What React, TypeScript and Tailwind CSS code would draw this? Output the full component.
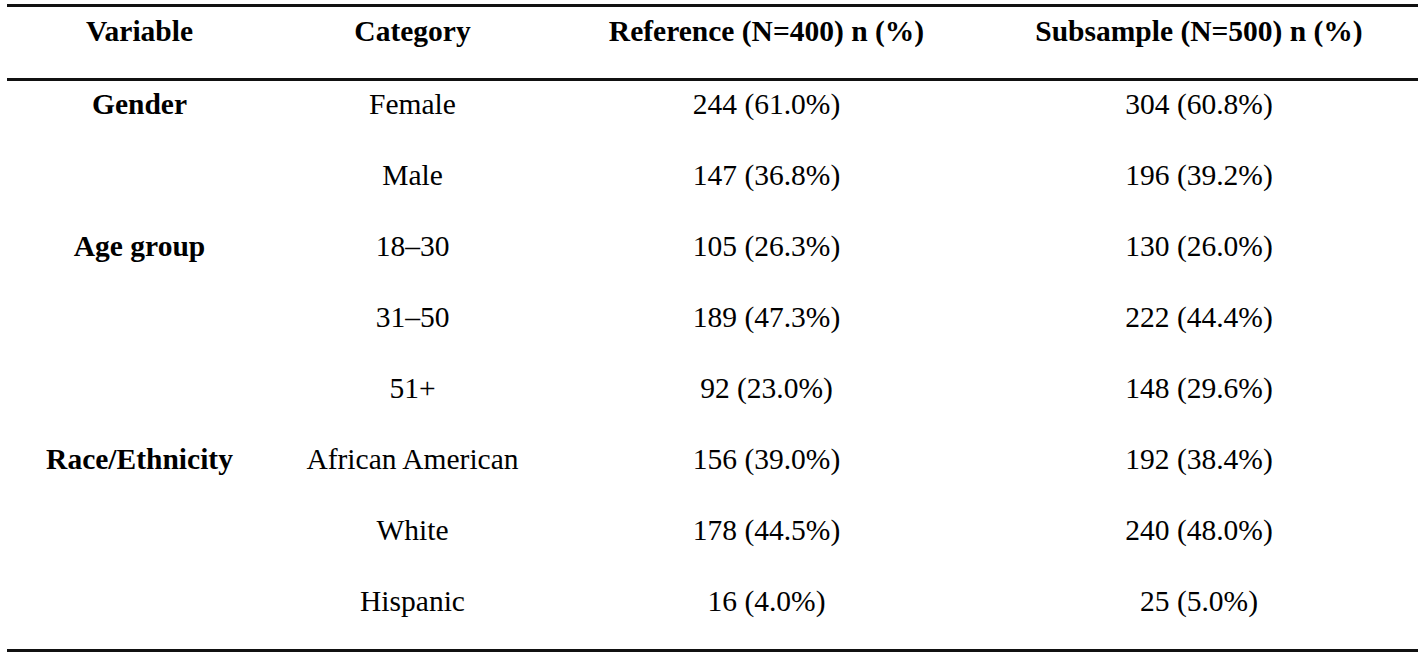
import React from "react";

const rows: [string, string, string, string][] = [
  ["Gender", "Female", "244 (61.0%)", "304 (60.8%)"],
  ["", "Male", "147 (36.8%)", "196 (39.2%)"],
  ["Age group", "18–30", "105 (26.3%)", "130 (26.0%)"],
  ["", "31–50", "189 (47.3%)", "222 (44.4%)"],
  ["", "51+", "92 (23.0%)", "148 (29.6%)"],
  ["Race/Ethnicity", "African American", "156 (39.0%)", "192 (38.4%)"],
  ["", "White", "178 (44.5%)", "240 (48.0%)"],
  ["", "Hispanic", "16 (4.0%)", "25 (5.0%)"],
];

export default function App() {
  return (
    <div
      className="w-[1421px] h-[657px] bg-white text-black overflow-hidden"
      style={{ fontFamily: '"Liberation Serif", "Times New Roman", serif' }}
    >
      <div className="ml-[7px] mt-[4px] w-[1411px] text-[29.5px] leading-[1.15]">
        <div className="grid grid-cols-[265px_281px_427px_438px] border-t-[3px] border-b-[3px] border-[#111] h-[77px] pt-[8px] font-bold text-center">
          <div>Variable</div>
          <div>Category</div>
          <div>Reference (N=400) n (%)</div>
          <div>Subsample (N=500) n (%)</div>
        </div>
        <div className="border-b-[3px] border-[#111]">
          {rows.map((r, i) => (
            <div
              key={i}
              className="grid grid-cols-[265px_281px_427px_438px] h-[71px] pt-[7px] text-center"
            >
              <div className="font-bold">{r[0]}</div>
              <div>{r[1]}</div>
              <div>{r[2]}</div>
              <div>{r[3]}</div>
            </div>
          ))}
        </div>
      </div>
    </div>
  );
}
